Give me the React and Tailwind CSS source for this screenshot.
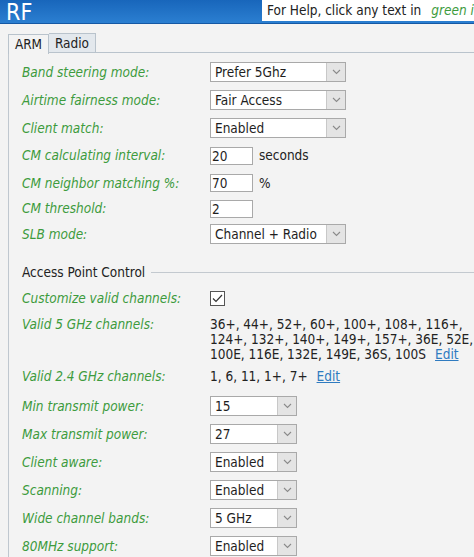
import React from "react";

const font = { fontFamily: '"DejaVu Sans Condensed", "DejaVu Sans", Verdana, sans-serif' };

function Chevron() {
  return (
    <svg width="9" height="6" viewBox="0 0 9 6" fill="none">
      <path d="M1 1 L4.5 4.5 L8 1" stroke="#8a8a8a" strokeWidth="1.1" />
    </svg>
  );
}

function Select({ value, wide }) {
  return (
    <div className={`flex h-[20px] border border-[#a9a9a9] bg-white ${wide ? "w-[136px]" : "w-[87px]"}`}>
      <div className="flex-1 pl-[4px] text-[13.5px] leading-[18px] text-[#1e1e1e]">{value}</div>
      <div className="flex w-[19px] items-center justify-center border-l border-[#c8c8c8] bg-[#e4e4e4]">
        <Chevron />
      </div>
    </div>
  );
}

function Input({ value }) {
  return (
    <div className="h-[18px] w-[43px] border border-[#a9a9a9] bg-white pl-[1px] text-[13.5px] leading-[16px] text-[#1e1e1e]">
      {value}
    </div>
  );
}

function Row({ label, h, children }) {
  return (
    <div className={`flex items-center ${h}`}>
      <div className="w-[188px] text-[13.5px] italic text-[#3d9b3d]">{label}</div>
      <div className="flex items-center">{children}</div>
    </div>
  );
}

export default function App() {
  return (
    <div className="h-[557px] w-[474px] overflow-hidden bg-[#f3f3f3]" style={font}>
      <div className="flex h-[24px] border-b border-[#1558a4] bg-gradient-to-b from-[#1866bb] to-[#2b7fd1]">
        <div className="pl-[6px] text-[23px] leading-[24px] text-white">RF</div>
        <div className="ml-auto flex h-[21px] w-[212px] items-center overflow-hidden bg-white pl-[5px] text-[13.5px] whitespace-nowrap text-[#222]">
          For Help, click any text in
          <span className="ml-[10px] italic text-[#3d9b3d]">green i</span>
        </div>
      </div>

      <div className="mt-[9px] ml-[8px] flex h-[20px] border-b border-[#b9c3cc]">
        <div className="relative top-[1px] flex h-[20px] w-[41px] items-center justify-center border border-b-0 border-[#b9c3cc] bg-[#f3f3f3] text-[13.5px] text-[#222]">
          ARM
        </div>
        <div className="flex h-[20px] w-[47px] items-center justify-center border border-l-0 border-[#b9c3cc] bg-[#e3e8ed] text-[13.5px] text-[#222]">
          Radio
        </div>
      </div>

      <div className="ml-[8px] h-[600px] border-l border-[#bfc7cf] pt-[5px] pl-[13px]">
        <Row label="Band steering mode:" h="h-[28px]"><Select value="Prefer 5Ghz" wide /></Row>
        <Row label="Airtime fairness mode:" h="h-[28px]"><Select value="Fair Access" wide /></Row>
        <Row label="Client match:" h="h-[28px]"><Select value="Enabled" wide /></Row>
        <Row label="CM calculating interval:" h="h-[27px]">
          <Input value="20" />
          <span className="ml-[6px] text-[13.5px] text-[#222]">seconds</span>
        </Row>
        <Row label="CM neighbor matching %:" h="h-[28px]">
          <Input value="70" />
          <span className="ml-[6px] text-[13.5px] text-[#222]">%</span>
        </Row>
        <Row label="CM threshold:" h="h-[23px]"><Input value="2" /></Row>
        <Row label="SLB mode:" h="h-[28px]"><Select value="Channel + Radio" wide /></Row>

        <div className="mt-[12px] flex h-[25px] items-center">
          <span className="text-[13.5px] text-[#222]">Access Point Control</span>
          <div className="ml-[6px] h-px flex-1 bg-[#c3c9cf]" />
        </div>

        <Row label="Customize valid channels:" h="h-[26px]">
          <div className="flex h-[15px] w-[15px] items-center justify-center border border-[#555] bg-white">
            <svg width="11" height="9" viewBox="0 0 11 9" fill="none">
              <path d="M1 4.5 L4 7.5 L10 1" stroke="#333" strokeWidth="1.2" />
            </svg>
          </div>
        </Row>

        <div className="mt-[6px] flex items-start text-[13.5px] leading-[15px]">
          <div className="w-[188px] italic text-[#3d9b3d]">Valid 5 GHz channels:</div>
          <div className="text-[#222] whitespace-nowrap">
            <div>36+, 44+, 52+, 60+, 100+, 108+, 116+,</div>
            <div>124+, 132+, 140+, 149+, 157+, 36E, 52E,</div>
            <div>
              100E, 116E, 132E, 149E, 36S, 100S
              <span className="ml-[9px] text-[#2f7bc0] underline">Edit</span>
            </div>
          </div>
        </div>

        <div className="mt-[7px] flex items-start text-[13.5px] leading-[15px]">
          <div className="w-[188px] italic text-[#3d9b3d]">Valid 2.4 GHz channels:</div>
          <div className="text-[#222] whitespace-nowrap">
            1, 6, 11, 1+, 7+
            <span className="ml-[9px] text-[#2f7bc0] underline">Edit</span>
          </div>
        </div>

        <div className="mt-[8px]">
          <Row label="Min transmit power:" h="h-[28px]"><Select value="15" /></Row>
          <Row label="Max transmit power:" h="h-[28px]"><Select value="27" /></Row>
          <Row label="Client aware:" h="h-[28px]"><Select value="Enabled" /></Row>
          <Row label="Scanning:" h="h-[28px]"><Select value="Enabled" /></Row>
          <Row label="Wide channel bands:" h="h-[28px]"><Select value="5 GHz" /></Row>
          <Row label="80MHz support:" h="h-[28px]"><Select value="Enabled" /></Row>
        </div>
      </div>
    </div>
  );
}
